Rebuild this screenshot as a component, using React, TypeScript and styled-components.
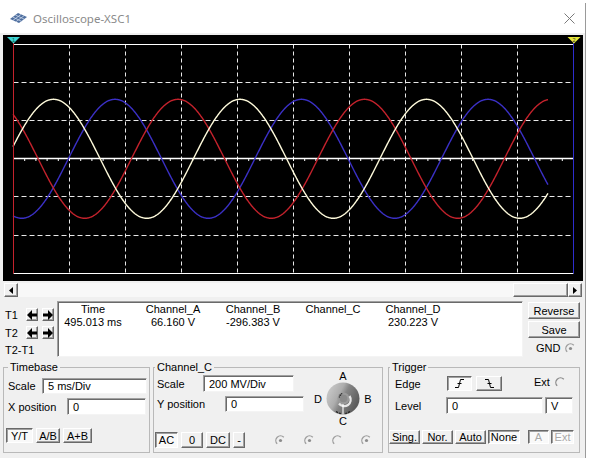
import React from "react";
import styled, { createGlobalStyle, css } from "styled-components";

const GlobalStyle = createGlobalStyle`
  html, body {
    margin: 0;
    padding: 0;
  }
  body {
    width: 589px;
    height: 458px;
    overflow: hidden;
    background-color: #fff;
    background-image: radial-gradient(circle, #4a4a4a 0.7px, transparent 1px);
    background-size: 9px 9px;
    font-family: "Liberation Sans", Arial, sans-serif;
    font-size: 11px;
    color: #000;
  }
`;

const raised = css`
  background: #f0f0f0;
  border: 1px solid;
  border-color: #fff #696969 #696969 #fff;
  box-shadow: inset -1px -1px 0 #a0a0a0;
`;

const pressed = css`
  background: #f9f9f9;
  border: 1px solid;
  border-color: #696969 #fff #fff #696969;
  box-shadow: inset 1px 1px 0 #a0a0a0;
`;

const sunken = css`
  background: #fff;
  border: 1px solid;
  border-color: #a0a0a0 #f4f4f4 #f4f4f4 #a0a0a0;
  box-shadow: inset 1px 1px 0 #6a6a6a;
`;

const Window = styled.div`
  margin-top: 3px;
  width: 586px;
  height: 455px;
  box-sizing: border-box;
  background: #f0f0f0;
  border-right: 1px solid #9a9a9a;
  display: flex;
  flex-direction: column;
  overflow: hidden;
`;

const TitleBar = styled.div`
  height: 30px;
  flex-shrink: 0;
  background: #fff;
  display: flex;
  align-items: center;
  gap: 6px;
  padding: 0 10px;
`;

const Title = styled.span`
  flex: 1;
  font-family: "Noto Sans", "Liberation Sans", sans-serif;
  font-size: 11.5px;
  color: #8a8a8a;
`;

const Screen = styled.div`
  margin: 2px 0 0 3px;
  width: 580px;
  height: 246px;
  flex-shrink: 0;
  background: #000;
  svg {
    display: block;
  }
`;

const ScrollBar = styled.div`
  margin: 2px 0 0 4px;
  width: 578px;
  height: 14px;
  flex-shrink: 0;
  display: flex;
  background: #f8f8f8;
`;

const ScrollButton = styled.div<{ $w?: number }>`
  ${raised};
  width: ${(p) => p.$w ?? 14}px;
  height: 14px;
  box-sizing: border-box;
  display: flex;
  align-items: center;
  justify-content: center;
`;

const ScrollTrack = styled.div`
  flex: 1;
`;

const CursorRow = styled.div`
  margin-top: 3px;
  padding-left: 3px;
  height: 57px;
  flex-shrink: 0;
  display: flex;
`;

const TPanel = styled.div`
  width: 52px;
  padding: 8px 0 0 2px;
  box-sizing: border-box;
  display: flex;
  flex-direction: column;
  gap: 5px;
`;

const TRow = styled.div`
  height: 13px;
  display: flex;
  align-items: center;
  gap: 4px;
`;

const TLabel = styled.span`
  width: 17px;
  font-size: 11px;
  line-height: 12px;
`;

const DeltaLabel = styled.span`
  line-height: 12px;
`;

const ArrowButton = styled.div`
  ${raised};
  width: 12px;
  height: 13px;
  box-sizing: border-box;
  display: flex;
  align-items: center;
  justify-content: center;
`;

const DataBox = styled.div`
  ${sunken};
  margin: 1px 0 0 2px;
  width: 466px;
  height: 56px;
  box-sizing: border-box;
  padding-top: 1px;
  display: grid;
  grid-template-columns: 75px repeat(4, 80px);
  grid-template-rows: 13px 13px;
  align-content: start;
`;

const Cell = styled.span<{ $first?: boolean }>`
  text-align: center;
  line-height: 13px;
  white-space: nowrap;
  padding-right: ${(p) => (p.$first ? 5 : 0)}px;
`;

const SideColumn = styled.div`
  margin-left: 5px;
  width: 52px;
  display: flex;
  flex-direction: column;
  gap: 2px;
  padding-top: 2px;
`;

const Button = styled.div<{ $w: number; $h?: number; $down?: boolean; $off?: boolean }>`
  ${(p) => (p.$down ? pressed : raised)};
  width: ${(p) => p.$w}px;
  height: ${(p) => p.$h ?? 15}px;
  box-sizing: border-box;
  display: flex;
  align-items: center;
  justify-content: center;
  font-size: 11px;
  white-space: nowrap;
  color: ${(p) => (p.$off ? "#a8a8a8" : "#000")};
  text-shadow: ${(p) => (p.$off ? "1px 1px 0 #fff" : "none")};
`;

const GndRow = styled.div`
  margin-top: 2px;
  padding-left: 8px;
  height: 12px;
  display: flex;
  align-items: center;
  gap: 5px;
`;

const ControlsRow = styled.div`
  margin-top: 4px;
  padding-left: 3px;
  display: flex;
`;

const Group = styled.fieldset<{ $w: number; $ml?: number }>`
  margin: 0 0 0 ${(p) => p.$ml ?? 0}px;
  padding: 0;
  min-width: 0;
  width: ${(p) => p.$w}px;
  height: 92px;
  box-sizing: border-box;
  border: 1px solid #b9b9b9;
`;

const Legend = styled.legend<{ $off: number }>`
  margin-left: ${(p) => p.$off}px;
  padding: 0 2px;
  line-height: 13px;
  font-size: 11px;
`;

const GroupBody = styled.div<{ $pl: number }>`
  padding-left: ${(p) => p.$pl}px;
  display: flex;
  flex-direction: column;
`;

const FieldRow = styled.div<{ $mt: number; $h: number; $pl?: number }>`
  margin-top: ${(p) => p.$mt}px;
  padding-left: ${(p) => p.$pl ?? 0}px;
  height: ${(p) => p.$h}px;
  display: flex;
  align-items: center;
`;

const Label = styled.span<{ $w?: number }>`
  width: ${(p) => (p.$w ? `${p.$w}px` : "auto")};
  flex-shrink: 0;
  white-space: nowrap;
`;

const TextBox = styled.div<{ $w: number; $ml?: number }>`
  ${sunken};
  margin-left: ${(p) => p.$ml ?? 0}px;
  width: ${(p) => p.$w}px;
  height: 100%;
  box-sizing: border-box;
  padding-left: 5px;
  display: flex;
  align-items: center;
  white-space: nowrap;
`;

const ButtonRow = styled.div<{ $mt: number; $ml?: number; $gap?: number }>`
  margin-top: ${(p) => p.$mt}px;
  margin-left: ${(p) => p.$ml ?? 0}px;
  display: flex;
  align-items: center;
  gap: ${(p) => p.$gap ?? 3}px;
`;

const TopArea = styled.div`
  display: flex;
  align-items: flex-start;
`;

const LeftFields = styled.div`
  width: 147px;
  display: flex;
  flex-direction: column;
`;

const KnobWidget = styled.div`
  margin: -4px 0 0 6px;
  display: grid;
  grid-template-columns: 16px 34px 16px;
  grid-template-rows: 12px 33px 12px;
  align-items: center;
  justify-items: center;
  font-size: 11px;
  line-height: 12px;
  svg {
    display: block;
  }
`;

const KnobLetter = styled.span<{ $col: number; $row: number }>`
  grid-column: ${(p) => p.$col};
  grid-row: ${(p) => p.$row};
`;

const RadioSet = styled.div`
  margin-left: 27px;
  display: flex;
  gap: 17.7px;
`;

const ExtLabel = styled.span`
  margin-left: 32px;
  align-self: flex-start;
  line-height: 12px;
`;

const RadioSlot = styled.span`
  margin-left: 5px;
  align-self: flex-start;
  padding-top: 1px;
`;

/* ---------- drawings ---------- */

const AppIcon = () => (
  <svg width="17" height="12" viewBox="0 0 17 12">
    <polygon points="0,7 8,1 17,5 9,11" fill="#4f6f9f" />
    <g stroke="#c9d6ea" strokeWidth="0.8">
      <line x1="2.7" y1="5" x2="11.7" y2="9.4" />
      <line x1="5.3" y1="3" x2="14.3" y2="7.2" />
      <line x1="3" y1="8.4" x2="11" y2="2.4" />
      <line x1="6" y1="9.7" x2="14" y2="3.7" />
    </g>
  </svg>
);

const CloseIcon = () => (
  <svg width="11" height="11" viewBox="0 0 11 11">
    <path d="M0.5 0.5 L10.5 10.5 M10.5 0.5 L0.5 10.5" stroke="#7a7a7a" strokeWidth="1" />
  </svg>
);

const Arrow = ({ dir }: { dir: "left" | "right" }) => (
  <svg width="10" height="10" viewBox="0 0 10 10">
    <polygon
      points="0,5 5,0 5,3.4 10,3.4 10,6.6 5,6.6 5,10"
      fill="#000"
      transform={dir === "right" ? "translate(10 0) scale(-1 1)" : undefined}
    />
  </svg>
);

const ScrollArrow = ({ dir }: { dir: "left" | "right" }) => (
  <svg width="4" height="7" viewBox="0 0 4 7">
    <polygon points={dir === "left" ? "4,0 0,3.5 4,7" : "0,0 4,3.5 0,7"} fill="#000" />
  </svg>
);

const Radio = ({ checked, ring = "#9c9c9c" }: { checked?: boolean; ring?: string }) => (
  <svg width="11" height="11" viewBox="0 0 11 11">
    <path d="M2.2 8.8 A4.6 4.6 0 0 1 8.8 2.2" fill="none" stroke={ring} strokeWidth="1.3" />
    {checked && <circle cx="5.5" cy="5.5" r="1.6" fill="#8c8c8c" />}
  </svg>
);

const EdgeGlyph = ({ rising }: { rising?: boolean }) => (
  <svg width="11" height="9" viewBox="0 0 11 9">
    <path
      d={rising ? "M1 8.5 H4.5 L6.5 0.5 H10" : "M1 0.5 H4.5 L6.5 8.5 H10"}
      fill="none"
      stroke="#000"
      strokeWidth="1"
    />
    <path d="M3.5 4.5 H7.5" stroke="#000" strokeWidth="1" />
  </svg>
);

const Knob = () => (
  <svg width="34" height="33" viewBox="0 0 34 33">
    <defs>
      <linearGradient id="knobFace" x1="0" y1="0" x2="1" y2="0.5">
        <stop offset="0" stopColor="#d2d2d2" />
        <stop offset="0.45" stopColor="#adadad" />
        <stop offset="0.6" stopColor="#858585" />
        <stop offset="1" stopColor="#5c5c5c" />
      </linearGradient>
    </defs>
    <ellipse cx="17" cy="16.5" rx="16.5" ry="16" fill="url(#knobFace)" />
    <circle cx="17.5" cy="16.5" r="6" fill="#9a9a9a" />
    <path d="M23.5 14 A6.4 6.4 0 0 1 13 21.5" fill="none" stroke="#e6e6e6" strokeWidth="2.2" />
    <circle cx="17.5" cy="16.5" r="3.8" fill="#8a8a8a" />
    <circle cx="14.3" cy="13.2" r="0.9" fill="#333" />
    <circle cx="15.6" cy="11.7" r="0.8" fill="#333" />
    <circle cx="13.4" cy="15" r="0.7" fill="#333" />
    <line x1="17" y1="22" x2="17" y2="32.5" stroke="#fff" strokeWidth="1.1" />
    <path d="M10 29.5 L12 30.6 M13 31 L14.8 31.6 M19.3 31.6 L21 31 M22 30.6 L24 29.5" stroke="#222" strokeWidth="1.2" />
  </svg>
);

/* ---------- scope screen ---------- */

const SW = 580;
const SH = 246;
const GRID_X = Array.from({ length: 11 }, (_, k) => 10.5 + 56 * k);
const GRID_Y = Array.from({ length: 7 }, (_, k) => Math.round(9 + 38.1 * k) + 0.5);
const CY = 123.8;
const AMP = 59.5;
const PERIOD = 186.5;

const wavePath = (peak: number) => {
  const pts: string[] = [];
  for (let x = 10; x <= 545; x += 0.5) {
    const y = CY - AMP * Math.cos((2 * Math.PI * (x - peak)) / PERIOD);
    pts.push(`${x.toFixed(1)},${y.toFixed(2)}`);
  }
  return "M" + pts.join(" L");
};

const TRACES = [
  { color: "#3b30c6", peak: 112 },
  { color: "#c4222c", peak: 175 },
  { color: "#fffbdc", peak: 50.5 },
];

const ScopeDisplay = () => {
  const left = GRID_X[0];
  const right = GRID_X[GRID_X.length - 1];
  const top = GRID_Y[0];
  const bottom = GRID_Y[GRID_Y.length - 1];
  const center = GRID_Y[3];
  const ticks = Array.from({ length: 51 }, (_, i) => left + 11.2 * i);
  return (
    <svg width={SW} height={SH} viewBox={`0 0 ${SW} ${SH}`}>
      <g stroke="#e8e8e8" strokeWidth="1" strokeDasharray="4 3">
        {GRID_X.slice(1, -1).map((x) => (
          <line key={`v${x}`} x1={x} y1={top} x2={x} y2={bottom} />
        ))}
        {GRID_Y.filter((_, k) => k === 1 || k === 2 || k === 4 || k === 5).map((y) => (
          <line key={`h${y}`} x1={left} y1={y} x2={right} y2={y} strokeDasharray="5 3" />
        ))}
      </g>
      <g stroke="#fff" strokeWidth="1">
        <line x1={left} y1={top} x2={right} y2={top} />
        <line x1={left} y1={bottom} x2={right} y2={bottom} />
        <line x1={left} y1={center} x2={right} y2={center} strokeWidth="1.4" />
        {ticks.map((x) => (
          <line key={`t${x}`} x1={x} y1={center} x2={x} y2={center + 2.5} />
        ))}
      </g>
      {TRACES.map((t) => (
        <path key={t.color} d={wavePath(t.peak)} fill="none" stroke={t.color} strokeWidth="1.4" />
      ))}
      <line x1={left} y1={3} x2={left} y2={bottom} stroke="#c4222c" strokeWidth="1" />
      <line x1={570.5} y1={3} x2={570.5} y2={bottom} stroke="#2d2dcf" strokeWidth="1" />
      <polygon points="4,2 17,2 10.5,8.5" fill="#3fd2d2" />
      <text x="10.5" y="7" fontSize="5.5" textAnchor="middle" fill="#064" fontFamily="Liberation Sans, sans-serif">
        1
      </text>
      <polygon points="564.5,2 577.5,2 571,8.5" fill="#e6e63a" />
      <text x="571" y="7" fontSize="5.5" textAnchor="middle" fill="#333" fontFamily="Liberation Sans, sans-serif">
        2
      </text>
    </svg>
  );
};

/* ---------- data ---------- */

const READOUT = [
  { head: "Time", value: "495.013 ms" },
  { head: "Channel_A", value: "66.160 V" },
  { head: "Channel_B", value: "-296.383 V" },
  { head: "Channel_C", value: "" },
  { head: "Channel_D", value: "230.223 V" },
];

const CursorStepper = ({ label }: { label: string }) => (
  <TRow>
    <TLabel>{label}</TLabel>
    <ArrowButton>
      <Arrow dir="left" />
    </ArrowButton>
    <ArrowButton>
      <Arrow dir="right" />
    </ArrowButton>
  </TRow>
);

const App: React.FC = () => {
  return (
    <>
      <GlobalStyle />
      <Window>
        <TitleBar>
          <AppIcon />
          <Title>Oscilloscope-XSC1</Title>
          <CloseIcon />
        </TitleBar>

        <Screen>
          <ScopeDisplay />
        </Screen>

        <ScrollBar>
          <ScrollButton>
            <ScrollArrow dir="left" />
          </ScrollButton>
          <ScrollTrack />
          <ScrollButton $w={55} />
          <ScrollButton>
            <ScrollArrow dir="right" />
          </ScrollButton>
        </ScrollBar>

        <CursorRow>
          <TPanel>
            <CursorStepper label="T1" />
            <CursorStepper label="T2" />
            <DeltaLabel>T2-T1</DeltaLabel>
          </TPanel>

          <DataBox>
            {READOUT.map((c, i) => (
              <Cell key={`h${c.head}`} $first={i === 0}>
                {c.head}
              </Cell>
            ))}
            {READOUT.map((c, i) => (
              <Cell key={`v${c.head}`} $first={i === 0}>
                {c.value}
              </Cell>
            ))}
          </DataBox>

          <SideColumn>
            <Button $w={52} $h={17}>Reverse</Button>
            <Button $w={52} $h={17}>Save</Button>
            <GndRow>
              <span>GND</span>
              <Radio checked />
            </GndRow>
          </SideColumn>
        </CursorRow>

        <ControlsRow>
          <Group $w={147}>
            <Legend $off={4}>Timebase</Legend>
            <GroupBody $pl={4}>
              <FieldRow $mt={4} $h={16}>
                <Label $w={34}>Scale</Label>
                <TextBox $w={105}>5 ms/Div</TextBox>
              </FieldRow>
              <FieldRow $mt={4} $h={17}>
                <Label $w={59}>X position</Label>
                <TextBox $w={79}>0</TextBox>
              </FieldRow>
              <ButtonRow $mt={13} $ml={-2}>
                <Button $w={27} $down>
                  Y/T
                </Button>
                <Button $w={24}>A/B</Button>
                <Button $w={29}>A+B</Button>
              </ButtonRow>
            </GroupBody>
          </Group>

          <Group $w={230} $ml={3}>
            <Legend $off={1}>Channel_C</Legend>
            <GroupBody $pl={3}>
              <TopArea>
                <LeftFields>
                  <FieldRow $mt={1} $h={17}>
                    <Label $w={46}>Scale</Label>
                    <TextBox $w={91}>200 MV/Div</TextBox>
                  </FieldRow>
                  <FieldRow $mt={4} $h={16}>
                    <Label $w={68}>Y position</Label>
                    <TextBox $w={79}>0</TextBox>
                  </FieldRow>
                </LeftFields>
                <KnobWidget>
                  <KnobLetter $col={2} $row={1}>A</KnobLetter>
                  <KnobLetter $col={1} $row={2}>D</KnobLetter>
                  <KnobLetter $col={2} $row={2}>
                    <Knob />
                  </KnobLetter>
                  <KnobLetter $col={3} $row={2}>B</KnobLetter>
                  <KnobLetter $col={2} $row={3}>C</KnobLetter>
                </KnobWidget>
              </TopArea>
              <ButtonRow $mt={5} $ml={-2}>
                <Button $w={23} $h={16} $down>
                  AC
                </Button>
                <Button $w={22} $h={16}>0</Button>
                <Button $w={24} $h={16}>DC</Button>
                <Button $w={12} $h={16}>-</Button>
                <RadioSet>
                  <Radio checked />
                  <Radio checked />
                  <Radio />
                  <Radio checked />
                </RadioSet>
              </ButtonRow>
            </GroupBody>
          </Group>

          <Group $w={192} $ml={5}>
            <Legend $off={1}>Trigger</Legend>
            <GroupBody $pl={0}>
              <FieldRow $mt={2} $h={15} $pl={6}>
                <Label $w={52}>Edge</Label>
                <Button $w={25} $down>
                  <EdgeGlyph rising />
                </Button>
                <Button $w={26} style={{ marginLeft: 4 }}>
                  <EdgeGlyph />
                </Button>
                <ExtLabel>Ext</ExtLabel>
                <RadioSlot>
                  <Radio ring="#8a8a8a" />
                </RadioSlot>
              </FieldRow>
              <FieldRow $mt={6} $h={17} $pl={6}>
                <Label $w={51}>Level</Label>
                <TextBox $w={97}>0</TextBox>
                <TextBox $w={28} $ml={2}>
                  V
                </TextBox>
              </FieldRow>
              <ButtonRow $mt={16} $gap={2}>
                <Button $w={31} $h={14}>Sing.</Button>
                <Button $w={31} $h={14}>Nor.</Button>
                <Button $w={31} $h={14}>Auto</Button>
                <Button $w={32} $h={14} $down>
                  None
                </Button>
                <Button $w={21} $h={14} $down $off style={{ marginLeft: 6 }}>
                  A
                </Button>
                <Button $w={23} $h={14} $down $off>
                  Ext
                </Button>
              </ButtonRow>
            </GroupBody>
          </Group>
        </ControlsRow>
      </Window>
    </>
  );
};

export default App;
